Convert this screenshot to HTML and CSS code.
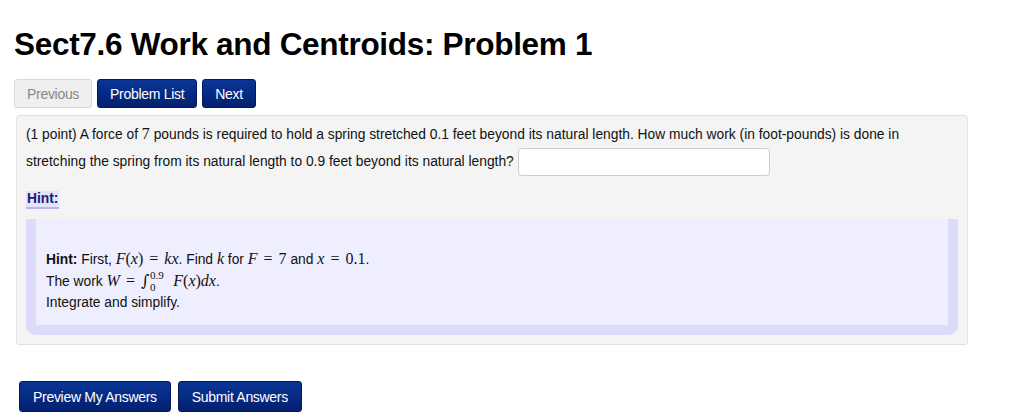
FILE: index.html
```html
<html lang="en">
    <head>
        <meta charset="UTF-8">
        <title>Sect7.6 Work and Centroids: Problem 1</title>
        <link rel="stylesheet" href="styles.css">
    </head>
    <body>
		<div class="page">
			<h1 class="title">Sect7.6 Work and Centroids: Problem 1</h1>
			<div class="nav">
				<button class="btn btn-off">Previous</button>
				<button class="btn">Problem List</button>
				<button class="btn">Next</button>
			</div>
			<div class="problem">
				<div class="text">(1 point) A force of <span class="m">7</span> pounds is required to hold a spring stretched 0.1 feet beyond its natural length. How much work (in foot-pounds) is done in stretching the spring from its natural length to 0.9 feet beyond its natural length? <input class="answer" type="text"></div>
				<div class="hint-row"><a class="hint-link">Hint:</a></div>
				<div class="hint-box">
					<div class="hint-line"><b>Hint:</b> First, <span class="m"><i>F</i>(<i>x</i>) = <i>kx</i></span>. Find <span class="m"><i>k</i></span> for <span class="m"><i>F</i> = 7</span> and <span class="m"><i>x</i> = 0.1</span>.</div>
					<div class="hint-line">The work <span class="m"><i>W</i> = <span class="int">&int;<span class="lims"><span class="up">0.9</span><span class="lo">0</span></span></span> <i>F</i>(<i>x</i>)<i>dx</i></span>.</div>
					<div class="hint-line">Integrate and simplify.</div>
				</div>
			</div>
			<div class="actions">
				<button class="btn btn-big">Preview My Answers</button>
				<button class="btn btn-big">Submit Answers</button>
			</div>
		</div>
	</body>
</html>
```

FILE: styles.css
```css
body {
	margin: 0;
	font-family: "Liberation Sans", Arial, sans-serif;
	color: #111;
}
div.page {
	padding: 0 56px 0 14px;
}
h1.title {
	margin: 27px 0 0 0;
	font-size: 31.5px;
	line-height: 34px;
	font-weight: bold;
	letter-spacing: -0.3px;
	color: #000;
}
div.nav {
	display: flex;
	gap: 5px;
	margin-top: 18px;
}
button.btn {
	height: 29px;
	padding: 0 12px;
	font-family: "Liberation Sans", Arial, sans-serif;
	font-size: 14px;
	letter-spacing: -0.3px;
	color: white;
	background: linear-gradient(#0a3596, #03206f);
	border: 1px solid #021a5c;
	border-radius: 3px;
	cursor: pointer;
}
button.btn-off {
	color: #888;
	background: #efefef;
	border: 1px solid #d8d8d8;
}
div.problem {
	margin: 7px 0 0 2px;
	padding: 8px 9px 9px 9px;
	background-color: #f4f4f4;
	border: 1px solid #e2e2e2;
	border-radius: 3px;
	font-size: 13.8px;
	line-height: 20px;
}
div.text {
	line-height: 27px;
	margin-top: -4px;
}
span.m {
	font-family: "Liberation Serif", "Times New Roman", serif;
	font-size: 16px;
	word-spacing: 2px;
}
input.answer {
	width: 252px;
	height: 28px;
	box-sizing: border-box;
	vertical-align: middle;
	border: 1px solid #ccc;
	border-radius: 4px;
	background: white;
}
div.hint-row {
	margin-top: 13px;
}
a.hint-link {
	font-weight: bold;
	color: #1a1a7a;
	background-color: #e4e4f8;
	border-bottom: 2px solid #b8b8ee;
	padding: 0 1px 1px 1px;
}
div.hint-box {
	margin-top: 10px;
	padding: 29px 10px 12px 10px;
	background-color: #eeeeff;
	border-left: 10px solid #dcdcfa;
	border-right: 10px solid #dcdcfa;
	border-bottom: 10px solid #dcdcfa;
	border-radius: 0 0 10px 10px;
}
div.hint-line {
	line-height: 21px;
}
span.int {
	display: inline-block;
	position: relative;
	font-family: "DejaVu Serif", serif;
	font-size: 16px;
	line-height: 16px;
	font-style: italic;
	padding-right: 18px;
}
span.lims {
	position: absolute;
	left: 9px;
	top: -4px;
	font-family: "Liberation Serif", serif;
	font-size: 11px;
	line-height: 12px;
	font-style: normal;
}
span.lims span {
	display: block;
}
div.actions {
	display: flex;
	gap: 7px;
	margin: 36px 0 0 5px;
}
button.btn-big {
	height: 31px;
	padding: 0 13px;
}
```
